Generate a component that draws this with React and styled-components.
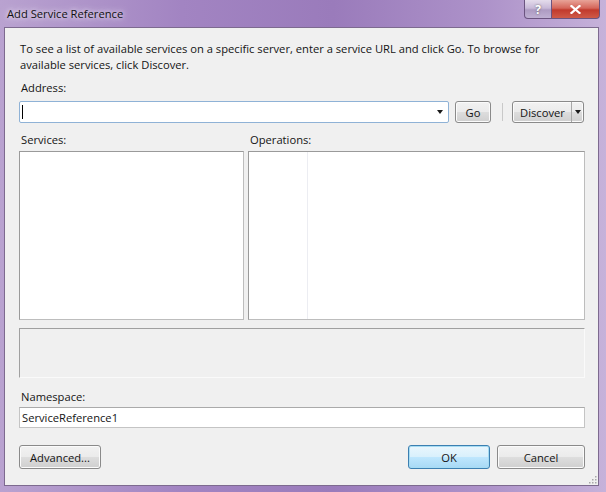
import React from 'react'
import styled, { createGlobalStyle } from 'styled-components'

const GlobalStyle = createGlobalStyle`
  html, body {
    margin: 0;
    padding: 0;
    background: #a98bc6;
  }
  body {
    font-family: "Open Sans", "Noto Sans", sans-serif;
  }
`

const Window = styled.div`
  width: 606px;
  height: 492px;
  display: flex;
  flex-direction: column;
  box-sizing: border-box;
  background: linear-gradient(90deg, #b9a2d0 0%, #a284c2 30%, #9a7bbb 55%, #ad92c9 80%, #c6b2da 100%);
  padding: 0 7px 6px 4px;
`

const TitleBar = styled.div`
  height: 27px;
  display: flex;
  align-items: flex-start;
  justify-content: space-between;
  flex-shrink: 0;
`

const Title = styled.div`
  font-size: 11.2px;
  color: #111;
  padding: 6px 0 0 3px;
  text-shadow: 0 0 8px #e6dcef, 0 0 4px #efe8f5;
`

const CaptionButtons = styled.div`
  display: flex;
  margin-right: -1px;
`

const CaptionButton = styled.div`
  width: ${p => p.$w}px;
  height: 19px;
  box-sizing: border-box;
  display: flex;
  align-items: center;
  justify-content: center;
  border: 1px solid #6b5480;
  border-top: none;
  color: #fff;
  font-size: 12px;
  font-weight: bold;
  background: ${p => p.$close
    ? 'linear-gradient(180deg, #e8a398 0%, #d5665a 45%, #c13a2d 55%, #cf5a48 100%)'
    : 'linear-gradient(180deg, #e4dcec 0%, #c8b9d8 45%, #ad9bc2 55%, #bfb0d3 100%)'};
  border-radius: ${p => p.$close ? '0 0 4px 0' : '0 0 0 4px'};
  border-left: ${p => p.$close ? 'none' : '1px solid #6b5480'};
  text-shadow: 0 0 2px #555;
`

const Client = styled.div`
  flex: 1;
  background: #f0f0f0;
  border: 1px solid #7d6a8f;
  display: flex;
  flex-direction: column;
  padding: 13px 13px 0 14px;
  font-size: 11.2px;
  color: #141414;
  position: relative;
`

const Description = styled.div`
  line-height: 16px;
  padding-left: 1px;
`

const Label = styled.div`
  line-height: 16px;
  padding-left: 2px;
  margin-top: ${p => p.$top}px;
`

const AddressRow = styled.div`
  display: flex;
  align-items: center;
  height: 22px;
  margin-top: 5px;
`

const Combo = styled.div`
  width: 430px;
  height: 22px;
  box-sizing: border-box;
  background: #fff;
  border: 1px solid #8fb2d6;
  border-radius: 2px;
  display: flex;
  align-items: center;
  justify-content: space-between;
  padding: 0 5px 0 2px;
`

const Caret = styled.div`
  width: 1px;
  height: 14px;
  background: #000;
`

const Arrow = styled.div`
  width: 0;
  height: 0;
  border-left: 3.5px solid transparent;
  border-right: 3.5px solid transparent;
  border-top: 4px solid #1a1a1a;
`

const Button = styled.div`
  width: ${p => p.$w}px;
  height: ${p => p.$h || 22}px;
  box-sizing: border-box;
  border: 1px solid ${p => p.$focus ? '#3c7fb1' : '#8a8a8a'};
  box-shadow: inset 0 0 0 1px ${p => p.$focus ? '#a6dcf3' : '#fbfbfb'};
  border-radius: 3px;
  background: ${p => p.$focus
    ? 'linear-gradient(180deg, #eaf6fd 0%, #d9f0fc 48%, #bee6fd 52%, #a7d9f5 100%)'
    : 'linear-gradient(180deg, #f2f2f2 0%, #ebebeb 48%, #dddddd 52%, #cfcfcf 100%)'};
  display: flex;
  align-items: center;
  justify-content: center;
  margin-left: ${p => p.$ml || 0}px;
  font-size: 11.2px;
  color: #141414;
`

const SplitButton = styled(Button)`
  justify-content: flex-start;
  padding: 0;
`

const SplitMain = styled.div`
  flex: 1;
  text-align: center;
  padding-left: 1px;
`

const SplitArrow = styled.div`
  width: 11px;
  height: 100%;
  border-left: 1px solid #a8a8a8;
  display: flex;
  align-items: center;
  justify-content: center;
`

const Separator = styled.div`
  width: 1px;
  height: 18px;
  background: #c9c9c9;
  margin-left: 11px;
`

const Lists = styled.div`
  display: grid;
  grid-template-columns: 225px 337px;
  column-gap: 4px;
`

const ListLabels = styled(Lists)`
  margin-top: 9px;
  line-height: 16px;
`

const ListBox = styled.div`
  height: 169px;
  box-sizing: border-box;
  background: #fff;
  border: 1px solid #9a9a9a;
  border-right-color: #bdbdbd;
  border-bottom-color: #bdbdbd;
  margin-top: 3px;
  display: flex;
`

const OpColumn = styled.div`
  width: 58px;
  border-right: 1px solid #ecedf2;
`

const InfoBox = styled.div`
  height: 50px;
  box-sizing: border-box;
  margin-top: 8px;
  background: #f0f0f0;
  border: 1px solid #a0a0a0;
  border-right-color: #fafafa;
  border-bottom-color: #fafafa;
`

const TextBox = styled.div`
  height: 21px;
  box-sizing: border-box;
  margin-top: 2px;
  background: #fff;
  border: 1px solid #c4c4c4;
  border-top-color: #aaaaaa;
  display: flex;
  align-items: center;
  padding-left: 2px;
`

const Footer = styled.div`
  display: flex;
  align-items: center;
  margin-top: 17px;
`

const Spacer = styled.div`
  flex: 1;
`

const Grip = styled.svg`
  position: absolute;
  right: 1px;
  bottom: 1px;
`

export default function App () {
  return (
    <>
      <GlobalStyle />
      <Window>
        <TitleBar>
          <Title>Add Service Reference</Title>
          <CaptionButtons>
            <CaptionButton $w={28}>?</CaptionButton>
            <CaptionButton $w={48} $close>
              <svg width='11' height='9' viewBox='0 0 11 9'>
                <path d='M1.5 1 L9.5 8 M9.5 1 L1.5 8' stroke='#fff' strokeWidth='2.2' strokeLinecap='square' />
              </svg>
            </CaptionButton>
          </CaptionButtons>
        </TitleBar>
        <Client>
          <Description>
            To see a list of available services on a specific server, enter a service URL and click Go. To browse for
            <br />
            available services, click Discover.
          </Description>
          <Label $top={7}>Address:</Label>
          <AddressRow>
            <Combo>
              <Caret />
              <Arrow />
            </Combo>
            <Button $w={36} $ml={6}>Go</Button>
            <Separator />
            <SplitButton $w={72} $ml={9}>
              <SplitMain>Discover</SplitMain>
              <SplitArrow><Arrow /></SplitArrow>
            </SplitButton>
          </AddressRow>
          <ListLabels>
            <Label>Services:</Label>
            <Label>Operations:</Label>
          </ListLabels>
          <Lists>
            <ListBox />
            <ListBox>
              <OpColumn />
            </ListBox>
          </Lists>
          <InfoBox />
          <Label $top={11}>Namespace:</Label>
          <TextBox>ServiceReference1</TextBox>
          <Footer>
            <Button $w={82} $h={24}>Advanced...</Button>
            <Spacer />
            <Button $w={82} $h={24} $focus>OK</Button>
            <Button $w={88} $h={24} $ml={7}>Cancel</Button>
          </Footer>
          <Grip width='10' height='10' viewBox='0 0 10 10'>
            {[[8, 2], [5, 5], [8, 5], [2, 8], [5, 8], [8, 8]].map(([x, y]) => (
              <rect key={`${x}-${y}`} x={x} y={y} width='1.5' height='1.5' fill='#a8a8a8' />
            ))}
          </Grip>
        </Client>
      </Window>
    </>
  )
}
